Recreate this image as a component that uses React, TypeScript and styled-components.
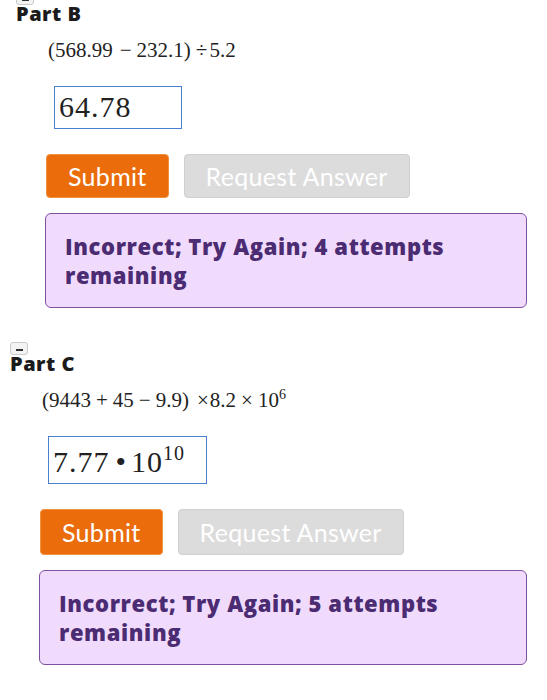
import React, { FC } from "react";
import styled, { createGlobalStyle } from "styled-components";

const colors = {
  heading: "#1b1b1b",
  math: "#222222",
  field: "#4b7fd0",
  orange: "#ea6c0b",
  orangeEdge: "#f0913f",
  grey: "#dcdcdc",
  greyEdge: "#cfcfcf",
  feedbackBg: "#f1dbfc",
  feedbackEdge: "#7d50a0",
  feedbackText: "#4b2b71",
};

const GlobalStyle = createGlobalStyle`
  body {
    margin: 0;
    background: #ffffff;
    font-family: Lato, "Open Sans", sans-serif;
  }
`;

const Page = styled.div`
  width: 547px;
  height: 700px;
  box-sizing: border-box;
  padding-right: 20px;
  overflow: hidden;
`;

const Section = styled.section<{ $left: number; $top: number }>`
  padding-left: ${(p) => p.$left}px;
  margin-top: ${(p) => p.$top}px;
`;

const Heading = styled.h3`
  position: relative;
  margin: 0;
  font-family: "Open Sans", sans-serif;
  font-weight: 800;
  font-size: 20px;
  line-height: 27px;
  letter-spacing: 0.5px;
  color: ${colors.heading};
`;

const Toggle = styled.span`
  position: absolute;
  left: 0;
  top: -8px;
  width: 18px;
  height: 13px;
  box-sizing: border-box;
  border: 1px solid #c9c9c9;
  border-radius: 3px;
  background: #f3f3f3;

  &::after {
    content: "";
    position: absolute;
    left: 5px;
    top: 6px;
    width: 7px;
    height: 2px;
    background: #333;
  }
`;

const HeadingText = styled.span`
  position: relative;
`;

const Body = styled.div`
  margin-left: 30px;
  display: flex;
  flex-direction: column;
  align-items: flex-start;
`;

const Expr = styled.div`
  margin: 11px 0 0 2px;
  font-family: "Liberation Serif", serif;
  font-size: 21px;
  line-height: 24px;
  color: ${colors.math};
  white-space: nowrap;
`;

const Op = styled.span<{ $l?: number; $r?: number }>`
  margin-left: ${(p) => p.$l ?? 5}px;
  margin-right: ${(p) => p.$r ?? 5}px;
`;

const Sup = styled.sup<{ $size: number; $raise: number }>`
  font-size: ${(p) => p.$size}px;
  vertical-align: ${(p) => p.$raise}px;
  line-height: 0;
`;

const AnswerBox = styled.div<{ $w: number; $h: number; $pt: number }>`
  margin: 24px 0 0 8px;
  width: ${(p) => p.$w}px;
  height: ${(p) => p.$h}px;
  box-sizing: border-box;
  border: 1.5px solid ${colors.field};
  padding: ${(p) => p.$pt}px 0 0 4px;
  font-family: "Liberation Serif", serif;
  font-size: 30px;
  line-height: 40px;
  letter-spacing: 1px;
  color: ${colors.math};
  white-space: nowrap;
`;

const Dot = styled.span`
  margin: 0 4px 0 6px;
`;

const ButtonRow = styled.div`
  margin-top: 25px;
  display: flex;
  gap: 15px;
`;

const Button = styled.button<{ $h: number; $primary?: boolean }>`
  height: ${(p) => p.$h}px;
  padding: 0 21px;
  box-sizing: border-box;
  border-radius: 4px;
  border: 1px solid ${(p) => (p.$primary ? colors.orangeEdge : colors.greyEdge)};
  background: ${(p) => (p.$primary ? colors.orange : colors.grey)};
  color: #ffffff;
  font-family: Lato, sans-serif;
  font-size: 25px;
  font-weight: 400;
  letter-spacing: 0.3px;
  cursor: ${(p) => (p.$primary ? "pointer" : "default")};
`;

const Feedback = styled.div`
  margin: 15px 0 0 -1px;
  align-self: stretch;
  padding: 18px 30px 17px 19px;
  border: 1.5px solid ${colors.feedbackEdge};
  border-radius: 6px;
  background: ${colors.feedbackBg};
  font-family: "Open Sans", sans-serif;
  font-weight: 800;
  font-size: 22px;
  line-height: 29px;
  letter-spacing: 0.6px;
  color: ${colors.feedbackText};
`;

interface IPart {
  title: string;
  left: number;
  top: number;
  expr: React.ReactNode;
  answer: React.ReactNode;
  box: { w: number; h: number; pt: number };
  buttonHeight: number;
  attempts: number;
}

const parts: IPart[] = [
  {
    title: "Part B",
    left: 16,
    top: 0,
    expr: (
      <>
        (568.99<Op $l={7}>−</Op>232.1)<Op $r={2}>÷</Op>5.2
      </>
    ),
    answer: "64.78",
    box: { w: 128, h: 43, pt: 0 },
    buttonHeight: 44,
    attempts: 4,
  },
  {
    title: "Part C",
    left: 10,
    top: 42,
    expr: (
      <>
        (9443<Op>+</Op>45<Op>−</Op>9.9)<Op $l={8} $r={1}>×</Op>8.2<Op>×</Op>10
        <Sup $size={14} $raise={8}>6</Sup>
      </>
    ),
    answer: (
      <>
        7.77<Dot>•</Dot>10
        <Sup $size={20} $raise={12}>10</Sup>
      </>
    ),
    box: { w: 159, h: 48, pt: 5 },
    buttonHeight: 46,
    attempts: 5,
  },
];

const Part: FC<{ part: IPart }> = ({ part }) => (
  <Section $left={part.left} $top={part.top}>
    <Heading>
      <Toggle />
      <HeadingText>{part.title}</HeadingText>
    </Heading>
    <Body>
      <Expr>{part.expr}</Expr>
      <AnswerBox $w={part.box.w} $h={part.box.h} $pt={part.box.pt}>
        {part.answer}
      </AnswerBox>
      <ButtonRow>
        <Button $h={part.buttonHeight} $primary>
          Submit
        </Button>
        <Button $h={part.buttonHeight}>Request Answer</Button>
      </ButtonRow>
      <Feedback>
        {`Incorrect; Try Again; ${part.attempts} attempts remaining`}
      </Feedback>
    </Body>
  </Section>
);

const App: FC = () => (
  <Page>
    <GlobalStyle />
    {parts.map((p) => (
      <Part key={p.title} part={p} />
    ))}
  </Page>
);

export default App;
